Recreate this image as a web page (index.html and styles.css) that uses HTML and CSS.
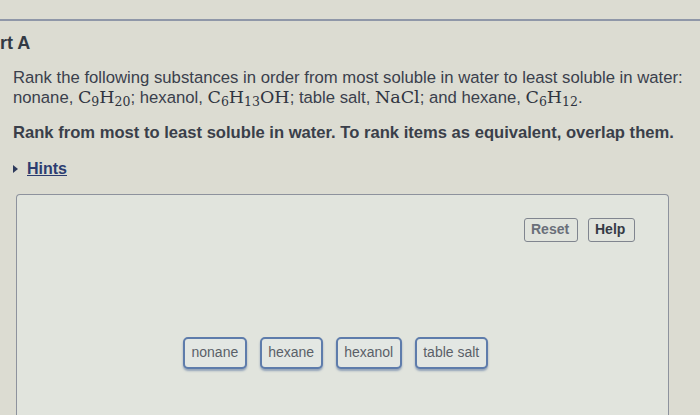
FILE: index.html
```html
<!DOCTYPE html>
<html>
<head>
<meta charset="utf-8">
<link rel="stylesheet" href="styles.css">
</head>
<body>
<div class="topbar"></div>
<div class="part-title">rt A</div>
<div class="content">
  <p class="question">Rank the following substances in order from most soluble in water to least soluble in water:<br>nonane, <span class="m">C<sub>9</sub>H<sub>20</sub></span>; hexanol, <span class="m">C<sub>6</sub>H<sub>13</sub>OH</span>; table salt, <span class="m">NaCl</span>; and hexane, <span class="m">C<sub>6</sub>H<sub>12</sub></span>.</p>
  <p class="instr">Rank from most to least soluble in water. To rank items as equivalent, overlap them.</p>
  <div class="hints"><span class="tri"></span><a class="hints-link">Hints</a></div>
</div>
<div class="box">
  <div class="tools">
    <span class="btn btn-reset">Reset</span>
    <span class="btn btn-help">Help</span>
  </div>
  <div class="chips">
    <span class="chip">nonane</span>
    <span class="chip">hexane</span>
    <span class="chip">hexanol</span>
    <span class="chip">table salt</span>
  </div>
</div>
</body>
</html>
```
FILE: styles.css
```css
html, body {
  margin: 0;
  padding: 0;
  height: 100%;
  overflow: hidden;
}
body {
  background: #dcdcd2;
  font-family: "Liberation Sans", Arial, sans-serif;
  color: #353b47;
}
.topbar {
  height: 19px;
  border-bottom: 2px solid #8f97a8;
}
.part-title {
  font-weight: bold;
  font-size: 18px;
  line-height: 20px;
  margin-top: 12px;
  color: #333a44;
}
.content {
  padding-left: 13px;
}
.question {
  margin: 16px 0 0 0;
  font-size: 16.7px;
  line-height: 18.5px;
  color: #3a404c;
}
.m {
  font-family: "DejaVu Serif", "Liberation Serif", serif;
  font-size: 17.5px;
  color: #2f3440;
}
.m sub {
  font-size: 12.5px;
  vertical-align: -3px;
  line-height: 0;
}
.instr {
  margin: 16px 0 0 0;
  font-size: 16.6px;
  font-weight: bold;
  line-height: 20px;
  color: #3a3f4a;
}
.hints {
  margin-top: 16px;
  display: flex;
  align-items: center;
  height: 20px;
}
.tri {
  width: 0;
  height: 0;
  border-top: 4px solid transparent;
  border-bottom: 4px solid transparent;
  border-left: 5px solid #2e3a5c;
  margin-right: 9px;
}
.hints-link {
  font-weight: bold;
  font-size: 16px;
  color: #2c3c70;
  text-decoration: underline;
}
.box {
  margin: 15px 0 0 16px;
  width: 651px;
  height: 260px;
  border: 1px solid #8d929d;
  border-bottom: none;
  border-radius: 4px 4px 0 0;
  background: #e1e4dd;
}
.tools {
  display: flex;
  justify-content: flex-end;
  gap: 10px;
  padding: 23px 33px 0 0;
}
.btn {
  box-sizing: border-box;
  height: 24px;
  border: 1.5px solid #80858f;
  border-radius: 3px;
  font-size: 14px;
  font-weight: bold;
  line-height: 21px;
  padding: 0 6px;
}
.btn-reset {
  width: 54px;
  color: #6a6f79;
}
.btn-help {
  width: 47px;
  color: #353a45;
}
.chips {
  display: flex;
  gap: 13px;
  padding: 95px 0 0 166px;
}
.chip {
  box-sizing: border-box;
  height: 32px;
  padding: 0 6.5px;
  border: 2px solid #5e7cab;
  border-radius: 5px;
  box-shadow: 0 2px 2px rgba(70, 100, 150, 0.5);
  font-size: 14px;
  line-height: 27px;
  color: #5a5f68;
  background: #e3e7e3;
}
```
